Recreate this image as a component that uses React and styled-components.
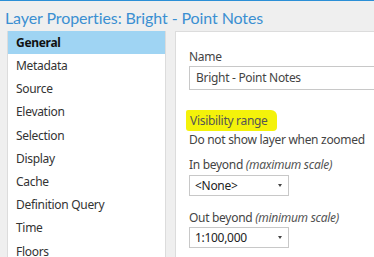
import React from 'react';
import styled, { createGlobalStyle } from 'styled-components';

const GlobalStyle = createGlobalStyle`
  html, body {
    margin: 0;
    padding: 0;
    background: #efefef;
    font-family: "Noto Sans", "Open Sans", sans-serif;
  }
`

const Window = styled.div`
  width: 374px;
  height: 257px;
  overflow: hidden;
  border-top: 1px solid #2b8fd6;
  box-sizing: border-box;
  background: #efefef;
`

const Title = styled.h1`
  margin: 0;
  height: 30px;
  padding: 7px 0 0 5px;
  box-sizing: border-box;
  font-family: Lato, sans-serif;
  font-weight: 400;
  font-size: 16px;
  letter-spacing: -0.1px;
  color: #3b8fd2;
  line-height: 20px;
  white-space: nowrap;
`

const Body = styled.div`
  display: flex;
  gap: 9px;
  padding-left: 7px;
`

const Sidebar = styled.ul`
  list-style: none;
  margin: 0;
  padding: 0;
  width: 159px;
  flex: none;
  height: 260px;
  background: #fff;
  border: 1px solid #dcdcdc;
  border-top: none;
  box-sizing: border-box;
`

const NavItem = styled.li`
  height: ${p => (p.$active ? 23 : 23.2)}px;
  line-height: 23px;
  padding-left: 8px;
  font-size: 12px;
  letter-spacing: -0.3px;
  color: ${p => (p.$active ? '#111' : '#333')};
  font-weight: ${p => (p.$active ? 700 : 400)};
  background: ${p => (p.$active ? '#9fd4f3' : 'transparent')};
  white-space: nowrap;
`

const Main = styled.div`
  flex: none;
  width: 260px;
  height: 260px;
  background: #fff;
  border: 1px solid #dcdcdc;
  box-sizing: border-box;
  padding: 16px 0 0 13px;
  display: flex;
  flex-direction: column;
`

const Label = styled.div`
  font-size: 12px;
  letter-spacing: -0.3px;
  color: #444;
  line-height: 17px;
  white-space: nowrap;
  margin-top: ${p => p.$top || 0}px;
  em {
    color: #555;
  }
`

const Highlight = styled.div`
  align-self: flex-start;
  margin: 20px 0 0 -3px;
  padding: 3px 9px 3px 4px;
  background: #f4f20a;
  font-size: 12px;
  letter-spacing: -0.3px;
  color: #555;
  line-height: 15px;
  border-radius: 2px 6px 4px 3px;
`

const TextBox = styled.div`
  height: 24px;
  margin-top: 1px;
  border: 1px solid #c8c8c8;
  box-sizing: border-box;
  padding-left: 6px;
  line-height: 22px;
  font-size: 12px;
  letter-spacing: -0.3px;
  color: #444;
`

const Select = styled.div`
  width: 100px;
  height: 21px;
  margin-top: ${p => p.$top || 2}px;
  border: 1px solid #c8c8c8;
  box-sizing: border-box;
  padding: 0 6px 0 5px;
  display: flex;
  align-items: center;
  justify-content: space-between;
  font-size: 12px;
  letter-spacing: -0.3px;
  color: #222;
`

const Caret = styled.span`
  width: 0;
  height: 0;
  border-left: 2.5px solid transparent;
  border-right: 2.5px solid transparent;
  border-top: 3px solid #444;
`

const items = ['General', 'Metadata', 'Source', 'Elevation', 'Selection', 'Display', 'Cache', 'Definition Query', 'Time', 'Floors']

export default function App() {
  return (
    <Window>
      <GlobalStyle />
      <Title>Layer Properties: Bright - Point Notes</Title>
      <Body>
        <Sidebar>
          {items.map((it, i) => (
            <NavItem key={it} $active={i === 0}>{it}</NavItem>
          ))}
        </Sidebar>
        <Main>
          <Label>Name</Label>
          <TextBox>Bright - Point Notes</TextBox>
          <Highlight>Visibility range</Highlight>
          <Label $top={0}>Do not show layer when zoomed</Label>
          <Label $top={8}>In beyond <em>(maximum scale)</em></Label>
          <Select $top={2}>&lt;None&gt;<Caret /></Select>
          <Label $top={13}>Out beyond <em>(minimum scale)</em></Label>
          <Select $top={1}>1:100,000<Caret /></Select>
        </Main>
      </Body>
    </Window>
  );
}
